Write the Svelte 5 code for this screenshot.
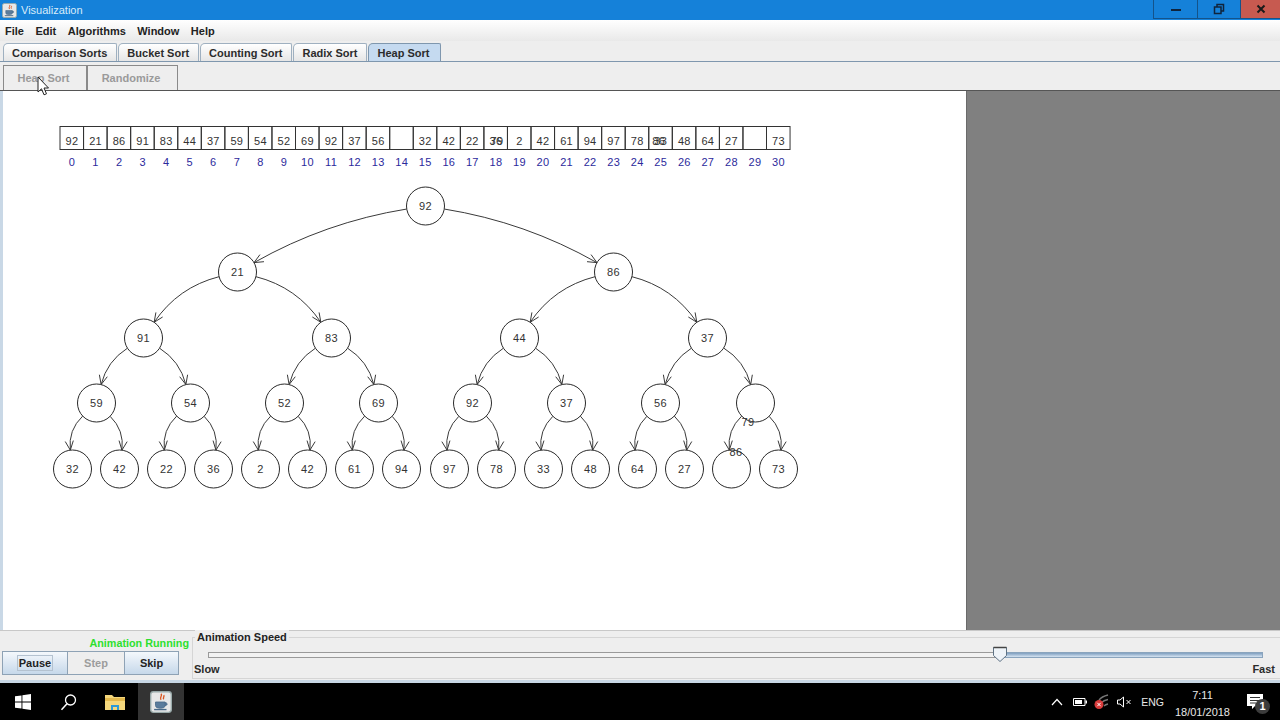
<script>
	const menus = ['File', 'Edit', 'Algorithms', 'Window', 'Help'];
	const tabs = ['Comparison Sorts', 'Bucket Sort', 'Counting Sort', 'Radix Sort', 'Heap Sort'];

	// heap contents, index 0 is the root
	const heap = [92, 21, 86, 91, 83, 44, 37, 59, 54, 52, 69, 92, 37, 56, '', 32, 42, 22, 36, 2, 42, 61, 94, 97, 78, 33, 48, 64, 27, '', 73];

	const levelY = [206, 272, 338, 403, 469];
	const levelX = [
		[425.5],
		[237.5, 613.5],
		[143.5, 331.5, 519.5, 707.5],
		[96.5, 190.5, 284.5, 378.5, 472.5, 566.5, 660.5, 755.5],
		[72.5, 119.5, 166.5, 213.5, 260.5, 307.5, 354.5, 401.5, 449.5, 496.5, 543.5, 590.5, 637.5, 684.5, 731.5, 778.5]
	];
	// how far each level's incoming edge bows out
	const bow = [0, 0.09, 0.19, 0.2, 0.25];
	const R = 19;

	const nodes = [];
	levelX.forEach((xs, l) => xs.forEach((x) => nodes.push({ x, y: levelY[l], level: l })));
	nodes.forEach((n, i) => (n.value = heap[i]));

	function toward(from, to, dist) {
		const dx = to.x - from.x;
		const dy = to.y - from.y;
		const len = Math.hypot(dx, dy);
		return { x: from.x + (dx / len) * dist, y: from.y + (dy / len) * dist };
	}

	function edge(parent, child, side) {
		const dx = child.x - parent.x;
		const dy = child.y - parent.y;
		const k = bow[child.level];
		// bulge outwards, away from the middle of the subtree
		const ctrl = {
			x: (parent.x + child.x) / 2 + side * dy * k,
			y: (parent.y + child.y) / 2 - side * dx * k
		};
		const a = toward(parent, ctrl, R);
		const b = toward(child, ctrl, R);
		const ang = Math.atan2(ctrl.y - b.y, ctrl.x - b.x);
		const wing = (d) => `${b.x + 10 * Math.cos(ang + d)} ${b.y + 10 * Math.sin(ang + d)}`;
		return {
			curve: `M${a.x} ${a.y}Q${ctrl.x} ${ctrl.y} ${b.x} ${b.y}`,
			head: `M${wing(0.42)}L${b.x} ${b.y}L${wing(-0.42)}`
		};
	}

	const edges = [];
	nodes.forEach((n, i) => {
		if (2 * i + 1 < nodes.length) edges.push(edge(n, nodes[2 * i + 1], -1));
		if (2 * i + 2 < nodes.length) edges.push(edge(n, nodes[2 * i + 2], 1));
	});

	const cellW = 23.55;
	const cells = heap.map((v, i) => ({ i, v, x: 60 + i * cellW }));
</script>

{#snippet javaCup(size)}
	<svg width={size} height={size} viewBox="0 0 16 16">
		<rect x="0.5" y="0.5" width="15" height="15" rx="2" fill="#e8e8e8" stroke="#9aa" />
		<path d="M8 2c1.5 1.500-1.500 2.500 0 4.500M10 3c.8 1-1 1.800 0 3" fill="none" stroke="#d9541e" stroke-width="1" />
		<path d="M4 8h7v2.500c0 1.500-1.500 2-3.500 2S4 12 4 10.500zM11 8.500c2 0 2 2-.2 2.200" fill="#5b7c9c" stroke="#4a6a88" stroke-width=".6" />
		<path d="M3 13.500h9" stroke="#4a6a88" stroke-width="1" />
	</svg>
{/snippet}

<div class="screen">
	<header class="titlebar">
		<span class="app-icon">{@render javaCup(15)}</span>
		<span class="title">Visualization</span>
		<div class="win-buttons">
			<button class="win-btn">
				<svg width="12" height="12" viewBox="0 0 12 12"><path d="M1 7h10" stroke="#10243c" stroke-width="2" /></svg>
			</button>
			<button class="win-btn second">
				<svg width="12" height="12" viewBox="0 0 12 12"><path d="M1.500 4h6.500v6.500h-6.500zM4 4v-2.500h6.500v6.500h-2.500" fill="none" stroke="#10243c" stroke-width="1.500" /></svg>
			</button>
			<button class="win-btn close">
				<svg width="12" height="12" viewBox="0 0 12 12"><path d="M2.500 2.500l7 7M9.500 2.500l-7 7" stroke="#1a1a1a" stroke-width="2" /></svg>
			</button>
		</div>
	</header>

	<nav class="menubar">
		{#each menus as m}
			<span class="menu-item">{m}</span>
		{/each}
	</nav>

	<div class="tabstrip">
		{#each tabs as t, i}
			<span class="tab" class:active={i === tabs.length - 1}>{t}</span>
		{/each}
	</div>

	<div class="toolbar">
		<button class="tool-btn first" disabled>Heap Sort</button>
		<button class="tool-btn second" disabled>Randomize</button>
		<svg class="cursor" width="14" height="20" viewBox="0 0 14 20">
			<path d="M1 1v15l3.500-3.200 2.500 6 2.500-1-2.500-5.800h4.500z" fill="#fff" stroke="#222" stroke-width="1" />
		</svg>
	</div>

	<main class="workspace">
		<svg class="canvas" viewBox="3 91 963 539">
			{#each cells as c}
				<rect class="cell" x={c.x} y="126.500" width={cellW} height="23" />
				<text class="num" x={c.x + 12} y="145">{c.v}</text>
				<text class="idx" x={c.x + 12} y="166">{c.i}</text>
			{/each}
			<text class="num" x={60 + 18 * cellW + 13} y="145">79</text>
			<text class="num" x={60 + 25 * cellW + 10} y="145">86</text>

			{#each edges as e}
				<path class="edge" d={e.curve} />
				<path class="edge" d={e.head} />
			{/each}
			{#each nodes as n}
				<circle class="node" cx={n.x} cy={n.y} r={R} />
				<text class="num" x={n.x} y={n.y + 4}>{n.value}</text>
			{/each}
			<text class="num" x="748" y="426">79</text>
			<text class="num" x="736" y="455.500">86</text>
		</svg>
		<div class="side"></div>
	</main>

	<section class="controls">
		<div class="anim">
			<div class="status">Animation Running</div>
			<div class="anim-buttons">
				<button class="ctl pause"><span>Pause</span></button>
				<button class="ctl step" disabled>Step</button>
				<button class="ctl skip">Skip</button>
			</div>
		</div>
		<div class="speed">
			<div class="legend"><span>Animation Speed</span></div>
			<div class="slider">
				<div class="track-done"></div>
				<div class="track-left"></div>
				<svg class="thumb" width="14" height="16" viewBox="0 0 14 16">
					<path d="M.5 1.500h13v8l-6.500 6-6.500-6z" fill="#eef3f8" stroke="#5f7385" />
					<path d="M.5 1.500h13" stroke="#444" stroke-width="1.500" />
				</svg>
			</div>
			<div class="ends"><span>Slow</span><span>Fast</span></div>
		</div>
	</section>

	<footer class="taskbar">
		<div class="task-left">
			<span class="task start">
				<svg width="16" height="16" viewBox="0 0 16 16"><path d="M0 2.300l6.500-.9v6.200h-6.500zM7.400 1.300l8.600-1.300v7.600h-8.600zM0 8.400h6.500v6.200l-6.500-.9zM7.400 8.400h8.600v7.600l-8.600-1.300z" fill="#fff" /></svg>
			</span>
			<span class="task search">
				<svg width="18" height="18" viewBox="0 0 18 18"><circle cx="10.500" cy="7" r="5" fill="none" stroke="#fff" stroke-width="1.300" /><path d="M7 10.800l-5.500 6" stroke="#fff" stroke-width="1.500" /></svg>
			</span>
			<span class="task folder">
				<svg width="22" height="18" viewBox="0 0 22 18"><path d="M1 2h7l2 2h11v13h-20z" fill="#f4d77c" /><path d="M1 5h20v3h-20z" fill="#e3b94e" /><path d="M7 17v-5h8v5h-2v-3h-4v3z" fill="#2b9ad8" /></svg>
			</span>
			<span class="task java">{@render javaCup(22)}</span>
		</div>
		<div class="tray">
			<svg class="t-chevron" width="12" height="8" viewBox="0 0 12 8"><path d="M1 7l5-5.500 5 5.500" fill="none" stroke="#fff" stroke-width="1.200" /></svg>
			<svg class="t-battery" width="14" height="10" viewBox="0 0 14 10"><path d="M.5 1.500h11.500v7h-11.500z" fill="none" stroke="#fff" /><path d="M2 3h7v4h-7z" fill="#fff" /><path d="M12.500 3.500h1.500v3h-1.500z" fill="#fff" /></svg>
			<svg class="t-net" width="16" height="16" viewBox="0 0 16 16"><path d="M5 6c2-2.500 5-4 9-5M7 9c2-2 4-3 7-3.500M10 12c1-1 2-1.600 4-2" fill="none" stroke="#777" stroke-width="1.300" /><circle cx="5" cy="10.500" r="4.500" fill="#d83a3a" /><path d="M3.300 8.800l3.400 3.400M6.700 8.800l-3.400 3.400" stroke="#fff" /></svg>
			<svg class="t-vol" width="15" height="12" viewBox="0 0 15 12"><path d="M.5 4h2.500l3.500-3v10l-3.500-3h-2.500z" fill="none" stroke="#fff" /><path d="M9.500 4l4 4M13.500 4l-4 4" stroke="#fff" /></svg>
			<span class="t-lang">ENG</span>
			<div class="t-clock"><span>7:11</span><span>18/01/2018</span></div>
			<span class="t-note">
				<svg width="18" height="16" viewBox="0 0 18 16"><path d="M0 0h16v12h-8l-3 3v-3h-5z" fill="#fff" /><path d="M3 3.500h10M3 6.500h10M3 9h6" stroke="#333" /></svg>
				<b>1</b>
			</span>
		</div>
	</footer>
</div>

<style>
	:global(body) {
		margin: 0;
		background: #000;
	}

	.screen {
		width: 1280px;
		height: 720px;
		display: flex;
		flex-direction: column;
		overflow: hidden;
		font-family: 'Liberation Sans', Arial, sans-serif;
		color: #222;
		background: #eeeeee;
	}

	.titlebar {
		height: 20px;
		flex: none;
		display: flex;
		align-items: center;
		background: #1581d9;
		color: #d8ecfa;
		font-size: 11px;
	}

	.app-icon {
		display: flex;
		margin: 0 4px 0 2px;
	}

	.title {
		flex: 1;
	}

	.win-buttons {
		display: flex;
		align-self: flex-start;
		height: 19px;
	}

	.win-btn {
		width: 44px;
		height: 19px;
		padding: 0;
		display: flex;
		align-items: center;
		justify-content: center;
		background: #1581d9;
		border: 0;
		border-left: 1px solid #14538a;
		border-bottom: 1px solid #14538a;
	}

	.win-btn.second {
		width: 43px;
	}

	.win-btn.close {
		width: 40px;
		background: #c75a50;
	}

	.menubar {
		height: 21px;
		flex: none;
		display: flex;
		align-items: center;
		gap: 11.5px;
		padding-left: 5px;
		font-size: 11px;
		font-weight: bold;
		background: linear-gradient(#ffffff, #e9e9e9);
	}

	.tabstrip {
		height: 21px;
		flex: none;
		display: flex;
		align-items: flex-end;
		gap: 1px;
		padding-left: 3px;
		box-sizing: border-box;
		background: #eeeeee;
		border-bottom: 1px solid #7f97ae;
	}

	.tab {
		height: 18px;
		display: flex;
		align-items: center;
		padding: 0 9px 0 8px;
		font-size: 11px;
		font-weight: bold;
		color: #2c2c2c;
		box-sizing: border-box;
		border: 1px solid #9fb0c0;
		border-bottom: 0;
		border-radius: 5px 2px 0 0;
		background: linear-gradient(#ffffff, #e6e6e6);
	}

	.tab.active {
		padding-right: 11px;
		background: #c5daf0;
		border-color: #7f97ae;
	}

	.toolbar {
		position: relative;
		height: 29px;
		flex: none;
		display: flex;
		align-items: flex-end;
		padding-left: 3px;
		background: #eeeeee;
		box-sizing: border-box;
		border-bottom: 1px solid #555;
	}

	.tool-btn {
		height: 25px;
		padding: 0 3px 0 0;
		font: bold 11px 'Liberation Sans', Arial, sans-serif;
		color: #9a9a9a;
		background: #eeeeee;
		border: 1px solid #8a8a8a;
		border-bottom: 0;
	}

	.tool-btn.first {
		width: 84px;
	}

	.tool-btn.second {
		width: 91px;
	}

	.cursor {
		position: absolute;
		left: 37px;
		top: 14px;
	}

	.workspace {
		height: 539px;
		flex: none;
		display: flex;
		padding-left: 3px;
		background: #c9d8e6;
	}

	.canvas {
		width: 963px;
		height: 539px;
		flex: none;
		background: #fff;
	}

	.side {
		flex: 1;
		background: #808080;
		border-left: 1px solid #6a6a6a;
	}

	.cell {
		fill: none;
		stroke: #333;
		stroke-width: 1;
	}

	.num,
	.idx {
		font-family: 'Liberation Sans', Arial, sans-serif;
		font-size: 11px;
		text-anchor: middle;
		letter-spacing: 0.3px;
	}

	.num {
		fill: #333;
	}

	.idx {
		fill: #2c2a9c;
	}

	.edge {
		fill: none;
		stroke: #3a3a3a;
		stroke-width: 1;
	}

	.node {
		fill: #fff;
		stroke: #2a2a2a;
		stroke-width: 1;
	}

	.controls {
		height: 53px;
		flex: none;
		display: flex;
		box-sizing: border-box;
		background: #eeeeee;
		border-top: 1px solid #c8c8c8;
		border-bottom: 3px solid #c9d8e6;
	}

	.anim {
		width: 192px;
		flex: none;
		padding: 6px 0 0 2px;
		box-sizing: border-box;
	}

	.status {
		height: 14px;
		padding-right: 3px;
		text-align: right;
		font-size: 10.8px;
		font-weight: bold;
		color: #2ee02e;
		white-space: nowrap;
	}

	.anim-buttons {
		display: flex;
		width: 177px;
	}

	.ctl {
		height: 24px;
		padding: 0;
		display: flex;
		align-items: center;
		justify-content: center;
		font: bold 11px 'Liberation Sans', Arial, sans-serif;
		color: #222;
		background: linear-gradient(#f4f8fc, #c6d8ea);
		border: 1px solid #8ea2b5;
	}

	.ctl.pause {
		width: 66px;
	}

	.ctl.pause span {
		padding: 1px 1px;
		border: 1px solid #b4c2d0;
	}

	.ctl.step {
		width: 56px;
		color: #9c9c9c;
		background: #eeeeee;
		border-left: 0;
		border-right: 0;
	}

	.ctl.skip {
		width: 55px;
	}

	.speed {
		flex: 1;
		padding: 0 5px 0 1px;
		border-left: 1px solid #d5d5d5;
		margin: 6px 0 1px;
		border-bottom: 1px solid #d5d5d5;
	}

	.legend {
		height: 1px;
		margin: 0 -5px 0 -1px;
		background: #d5d5d5;
		position: relative;
	}

	.legend span {
		position: absolute;
		left: 2px;
		top: -7px;
		padding: 0 2px;
		background: #eeeeee;
		font-size: 11px;
		font-weight: bold;
		line-height: 14px;
		white-space: nowrap;
	}

	.slider {
		position: relative;
		display: flex;
		height: 6px;
		margin: 14px 12px 0 14px;
	}

	.track-done {
		width: 792px;
		flex: none;
		box-sizing: border-box;
		background: #f2f2f2;
		border: 1px solid #9a9a9a;
	}

	.track-left {
		flex: 1;
		box-sizing: border-box;
		background: linear-gradient(#7f9fc0, #d6e4f2);
		border: 1px solid #8aa4bd;
	}

	.thumb {
		position: absolute;
		left: 785px;
		top: -6px;
	}

	.ends {
		display: flex;
		justify-content: space-between;
		margin-top: 4px;
		font-size: 11px;
		font-weight: bold;
		color: #2a2a2a;
		line-height: 14px;
	}

	.taskbar {
		flex: 1;
		display: flex;
		justify-content: space-between;
		background: #000;
		color: #e8e8e8;
	}

	.task-left {
		display: flex;
	}

	.task {
		width: 46px;
		display: flex;
		align-items: center;
		justify-content: center;
	}

	.task.java {
		background: #333;
	}

	.tray {
		display: flex;
		align-items: center;
		font-size: 11px;
		padding-right: 15px;
	}

	.t-chevron {
		margin-right: 10px;
	}

	.t-battery {
		margin-right: 7px;
	}

	.t-net {
		margin-right: 7px;
	}

	.t-vol {
		margin-right: 9px;
	}

	.t-lang {
		font-size: 10.500px;
		margin-right: 11px;
	}

	.t-clock {
		display: flex;
		flex-direction: column;
		align-items: center;
		gap: 4px;
		margin-right: 17px;
		padding-top: 4px;
		line-height: 13px;
	}

	.t-note {
		position: relative;
		display: flex;
	}

	.t-note b {
		position: absolute;
		left: 8px;
		top: 5px;
		width: 15px;
		height: 15px;
		border-radius: 50%;
		background: #3c3c3c;
		text-align: center;
		font-size: 11px;
		line-height: 15px;
		color: #fff;
	}
</style>
